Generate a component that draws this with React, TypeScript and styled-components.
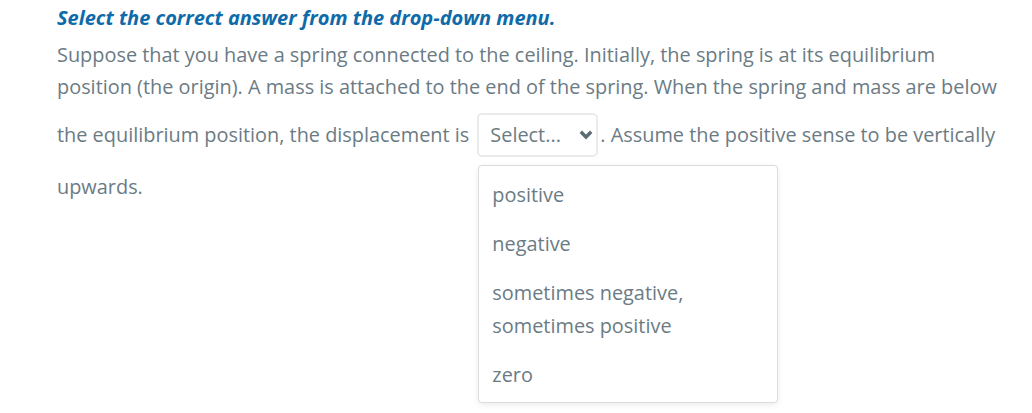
import React from "react";
import styled, { createGlobalStyle } from "styled-components";

const Global = createGlobalStyle`
  html, body { margin: 0; padding: 0; background: #ffffff; min-height: 413px; }
  body { font-family: "Open Sans", "Noto Sans", sans-serif; }
`;

const Page = styled.div`
  padding: 3px 32px 0 57px;
  width: 1032px;
  min-height: 413px;
  box-sizing: border-box;
`;

const Title = styled.div`
  font-size: 20px;
  font-weight: 700;
  font-style: italic;
  color: #0e6aa8;
  line-height: 30px;
`;

const Para = styled.div`
  margin-top: 6px;
  font-size: 19.9px;
  line-height: 32px;
  color: #6b7b84;
`;

const SelectWrap = styled.span`
  position: relative;
  display: inline-block;
  margin: 10px 2px 14px 8px;
  vertical-align: middle;
`;

const SelectBox = styled.span`
  display: inline-flex;
  align-items: center;
  gap: 10px;
  height: 44px;
  box-sizing: border-box;
  width: 121px;
  padding: 0 3px 0 11px;
  border: 2px solid #ebebeb;
  border-radius: 5px;
  color: #6b7b84;
  background: #fff;
  white-space: nowrap;
`;

const Chevron = styled.svg`
  width: 14px;
  height: 10px;
  flex: none;
  margin-left: auto;
`;

const Menu = styled.div`
  position: absolute;
  top: 52px;
  left: 1px;
  width: 300px;
  box-sizing: border-box;
  padding: 5px 0 2px;
  background: #fff;
  border: 1px solid #dcdcdc;
  border-radius: 4px;
  box-shadow: 0 2px 6px rgba(0, 0, 0, 0.08);
  z-index: 2;
`;

const Option = styled.div`
  padding: 7px 13px 9px;
  font-size: 19.9px;
  line-height: 33px;
  color: #6b7b84;
`;

const options = ["positive", "negative", "sometimes negative, sometimes positive", "zero"];

export default function App() {
  return (
    <>
      <Global />
      <Page>
        <Title>Select the correct answer from the drop-down menu.</Title>
        <Para>
          Suppose that you have a spring connected to the ceiling. Initially, the spring is at its equilibrium
          position (the origin). A mass is attached to the end of the spring. When the spring and mass are below
          the equilibrium position, the displacement is
          <SelectWrap>
            <SelectBox>
              Select...
              <Chevron viewBox="0 0 14 10">
                <polyline points="1.8,1.8 7,7 12.2,1.8" fill="none" stroke="#5a6b73" strokeWidth="3.4" />
              </Chevron>
            </SelectBox>
            <Menu>
              {options.map((o) => (
                <Option key={o}>{o}</Option>
              ))}
            </Menu>
          </SelectWrap>
          . Assume the positive sense to be vertically upwards.
        </Para>
      </Page>
    </>
  );
}
